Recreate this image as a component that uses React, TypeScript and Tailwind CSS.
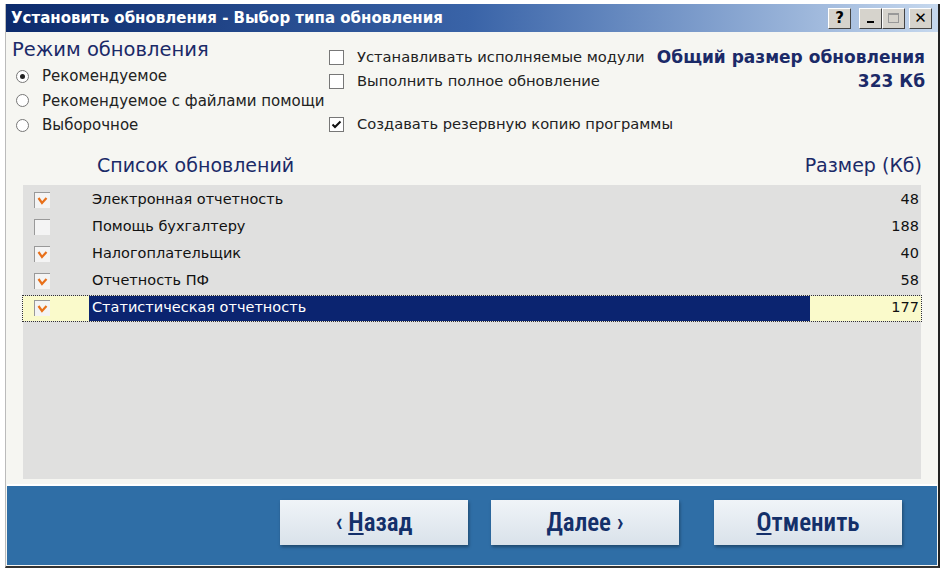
import React from 'react';

const rows = [
  { name: 'Электронная отчетность', size: 48, checked: true },
  { name: 'Помощь бухгалтеру', size: 188, checked: false },
  { name: 'Налогоплательщик', size: 40, checked: true },
  { name: 'Отчетность ПФ', size: 58, checked: true },
  { name: 'Статистическая отчетность', size: 177, checked: true, selected: true },
];

const body = { fontFamily: '"DejaVu Sans", "Liberation Sans", sans-serif' };

function Radio({ on }: { on?: boolean }) {
  return (
    <span className="w-[13px] h-[13px] rounded-full border border-[#777] bg-white flex items-center justify-center shrink-0">
      {on && <span className="w-[5px] h-[5px] rounded-full bg-[#222]" />}
    </span>
  );
}

function Check({ on }: { on?: boolean }) {
  return (
    <span className="w-[15px] h-[15px] border border-[#777] bg-white flex items-center justify-center shrink-0">
      {on && (
        <svg width="11" height="11" viewBox="0 0 11 11">
          <path d="M1.5 5.5 L4 8 L9.5 2.5" stroke="#111" strokeWidth="2" fill="none" />
        </svg>
      )}
    </span>
  );
}

function ListCheck({ on }: { on?: boolean }) {
  return (
    <span className="w-[16px] h-[16px] border-l border-t border-[#999] bg-[#f4f4f4] flex items-center justify-center">
      {on && (
        <svg width="11" height="11" viewBox="0 0 11 11">
          <path d="M1.5 3 L5 8 L9.5 3" stroke="#e8701a" strokeWidth="2.2" fill="none" />
        </svg>
      )}
    </span>
  );
}

function TitleButton({ children }: { children: React.ReactNode }) {
  return (
    <span className="w-[23px] h-[21px] bg-[#d6d3cc] border-t border-l border-white border-r border-b border-r-[#444] border-b-[#444] flex items-center justify-center text-[15px] font-bold text-black leading-none">
      {children}
    </span>
  );
}

function WizButton({ children }: { children: React.ReactNode }) {
  return (
    <button className="w-[188px] h-[45px] bg-gradient-to-b from-[#f0f4f8] to-[#d9e2ea] shadow-[1px_2px_3px_rgba(0,0,0,0.35)] text-[25px] text-[#14306a] font-semibold" style={{ fontFamily: '"Liberation Sans Narrow", "Roboto Condensed", "Liberation Sans", sans-serif' }}>
      {children}
    </button>
  );
}

export default function App() {
  return (
    <div className="w-[944px] h-[572px] bg-white pt-[4px] pl-[5px] pr-[4px] pb-[4px]" style={body}>
      <div className="h-full flex flex-col bg-[#f6f6f2] border-l border-[#bbb] border-r-2 border-r-[#222] border-b-2 border-b-[#333]">
        {/* title bar */}
        <div className="h-[28px] flex items-center justify-between pl-[5px] pr-[6px] bg-gradient-to-r from-[#0c2a6c] via-[#3a64a8] to-[#c6d8ee]">
          <span className="text-white font-bold text-[15px]">
            Установить обновления - Выбор типа обновления
          </span>
          <div className="flex items-center">
            <TitleButton>?</TitleButton>
            <span className="w-[8px]" />
            <TitleButton><span className="w-[7px] h-[2px] bg-black mt-[8px]" /></TitleButton>
            <TitleButton><span className="w-[11px] h-[10px] border border-[#999] border-t-2" /></TitleButton>
            <span className="w-[4px]" />
            <TitleButton>✕</TitleButton>
          </div>
        </div>

        {/* options */}
        <div className="flex px-[6px] pt-[7px]">
          <div className="w-[317px] shrink-0">
            <div className="text-[19.5px] leading-[22px] text-[#1b2a68]">Режим обновления</div>
            <div className="flex flex-col text-[15px] text-[#222] pt-[3px]">
              <label className="flex items-center gap-[13px] h-[24.5px] pl-[4px]"><Radio on />Рекомендуемое</label>
              <label className="flex items-center gap-[13px] h-[24.5px] pl-[4px]"><Radio />Рекомендуемое с файлами помощи</label>
              <label className="flex items-center gap-[13px] h-[24.5px] pl-[4px]"><Radio />Выборочное</label>
            </div>
          </div>
          <div className="w-[300px] shrink-0 flex flex-col text-[14.7px] text-[#222] pt-[6px] whitespace-nowrap">
            <label className="flex items-center gap-[13px] h-[24px]"><Check />Устанавливать исполняемые модули</label>
            <label className="flex items-center gap-[13px] h-[24px]"><Check />Выполнить полное обновление</label>
            <span className="h-[19px]" />
            <label className="flex items-center gap-[13px] h-[24px]"><Check on />Создавать резервную копию программы</label>
          </div>
          <div className="flex-1 flex flex-col items-end pr-[7px] pt-[6px] text-[17px] font-bold text-[#1b2a68] leading-[24px] whitespace-nowrap">
            <span>Общий размер обновления</span>
            <span>323 Кб</span>
          </div>
        </div>

        {/* list header */}
        <div className="flex justify-between pl-[91px] pr-[16px] mt-[13px] h-[30px] items-center text-[19px] text-[#1b2a68]">
          <span>Список обновлений</span>
          <span>Размер (Кб)</span>
        </div>

        {/* list */}
        <div className="mx-[17px] mt-[4px] h-[294px] bg-[#e0e0df] pt-[2px]">
          {rows.map((r) => (
            <div
              key={r.name}
              className={
                'flex h-[27px] items-center text-[14.5px] ' +
                (r.selected ? 'border border-dotted border-[#333] -mx-[1px]' : '')
              }
            >
              <div className={'w-[66px] h-full flex items-center pl-[11px] ' + (r.selected ? 'bg-[#fafacb]' : '')}>
                <ListCheck on={r.checked} />
              </div>
              <div className={'flex-1 h-full flex items-center pl-[3px] ' + (r.selected ? 'bg-[#0b2470] text-white' : 'text-[#111]')}>
                {r.name}
              </div>
              <div className={'w-[111px] h-full flex items-center justify-end pr-[2px] ' + (r.selected ? 'bg-[#fafacb] text-[#111]' : 'text-[#111]')}>
                {r.size}
              </div>
            </div>
          ))}
        </div>

        {/* footer */}
        <div className="mt-auto mx-[1px] h-[81px] mb-[1px] bg-[#2f6ea6] border-t-2 border-[#fff] flex items-center justify-end pr-[35px] pb-[6px]">
          <WizButton>‹ <span className="underline">Н</span>азад</WizButton>
          <span className="w-[23px]" />
          <WizButton><span className="underline">Д</span>алее ›</WizButton>
          <span className="w-[35px]" />
          <WizButton><span className="underline">О</span>тменить</WizButton>
        </div>
      </div>
    </div>
  );
}
